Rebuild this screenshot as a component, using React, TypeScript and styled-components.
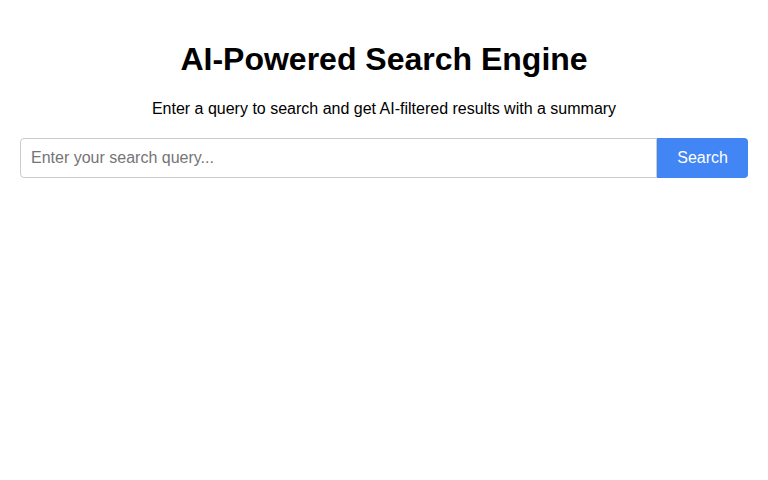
import React, { useState } from 'react';
import styled, { createGlobalStyle } from 'styled-components';

const GlobalStyle = createGlobalStyle`
  body {
    margin: 0;
    background: #fff;
    font-family: "Liberation Sans", Arial, sans-serif;
    color: #000;
  }
`;

const Page = styled.div`
  padding: 20px;
  text-align: center;
`;

const Title = styled.h1`
  font-size: 32px;
  font-weight: bold;
  margin: 21.44px 0;
`;

const Subtitle = styled.p`
  font-size: 16px;
  margin: 16px 0 20px;
`;

const SearchForm = styled.form`
  display: flex;
`;

const QueryInput = styled.input`
  flex: 1;
  padding: 10px;
  font-size: 16px;
  font-family: "Liberation Sans", Arial, sans-serif;
  border: 1px solid #ccc;
  border-radius: 4px 0 0 4px;
  outline: none;

  &::placeholder {
    color: #757575;
  }
`;

const SearchButton = styled.button`
  padding: 10px 20px;
  font-size: 16px;
  font-family: "Liberation Sans", Arial, sans-serif;
  background: #4285f4;
  color: #fff;
  border: none;
  border-radius: 0 4px 4px 0;
  cursor: pointer;
`;

export default function App() {
  const [query, setQuery] = useState('');

  return (
    <>
      <GlobalStyle />
      <Page>
        <Title>AI-Powered Search Engine</Title>
        <Subtitle>Enter a query to search and get AI-filtered results with a summary</Subtitle>
        <SearchForm onSubmit={(e) => e.preventDefault()}>
          <QueryInput
            type="text"
            value={query}
            onChange={(e) => setQuery(e.target.value)}
            placeholder="Enter your search query..."
          />
          <SearchButton type="submit">Search</SearchButton>
        </SearchForm>
      </Page>
    </>
  );
}
